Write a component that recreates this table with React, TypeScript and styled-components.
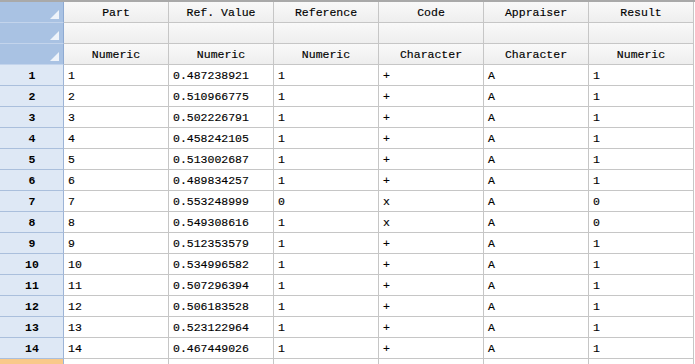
import {Fragment} from "react";
import styled, {createGlobalStyle} from "styled-components";

const GlobalStyle = createGlobalStyle`
  html, body {
    margin: 0;
    padding: 0;
    background: #ffffff;
  }
  * {
    box-sizing: border-box;
  }
`;

const Sheet = styled.div`
  display: grid;
  grid-template-columns: 64px repeat(6, 105px);
  grid-auto-rows: 21px;
  border-top: 2px solid #a9a9a9;
  font-family: "Liberation Mono", "Courier New", monospace;
  font-size: 11.5px;
  color: #000;
  -webkit-text-stroke: 0.15px #000;
  width: 695px;
`;

const Corner = styled.div`
  position: relative;
  background: #a9c2e3;
  border-right: 1px solid #8eaad2;
  border-bottom: 1px solid #c3d4ec;

  &::after {
    content: "";
    position: absolute;
    right: 4px;
    bottom: 3px;
    width: 9px;
    height: 9px;
    background: #eef3fa;
    clip-path: polygon(100% 0, 100% 100%, 0 100%);
  }
`;

const ColHead = styled.div`
  display: flex;
  align-items: center;
  justify-content: center;
  background: linear-gradient(#f9f9f9, #eeeeee);
  border-right: 1px solid #c6c6c6;
  border-bottom: 1px solid #c6c6c6;
  white-space: pre;
`;

const RowHead = styled.div<{ $current?: boolean }>`
  display: flex;
  align-items: center;
  justify-content: center;
  padding-left: 1px;
  font-weight: bold;
  -webkit-text-stroke: 0;
  background: ${props => props.$current ? "#f9c98a" : "#dee8f5"};
  border-right: 1px solid #9db4d6;
  border-bottom: 1px solid #aabfdc;
`;

const Cell = styled.div`
  display: flex;
  align-items: center;
  padding-left: 4px;
  background: #ffffff;
  border-right: 1px solid #c6c6c6;
  border-bottom: 1px solid #c6c6c6;
  white-space: pre;
`;

const columns = ["Part", "Ref. Value", "Reference", "Code", "Appraiser", "Result"];
const types = ["Numeric", "Numeric", "Numeric", "Character", "Character", "Numeric"];

const refValues = [
    "0.487238921", "0.510966775", "0.502226791", "0.458242105", "0.513002687",
    "0.489834257", "0.553248999", "0.549308616", "0.512353579", "0.534996582",
    "0.507296394", "0.506183528", "0.523122964", "0.467449026",
];

const rows = refValues.map((ref, i) => {
    const bad = i === 6 || i === 7;
    const reference = i === 6 ? "0" : "1";
    return [String(i + 1), ref, reference, bad ? "x" : "+", "A", bad ? "0" : "1"];
});

function App() {
    return (
        <>
            <GlobalStyle/>
            <Sheet>
                <Corner/>
                {columns.map(c => <ColHead key={c}>{c}</ColHead>)}
                <Corner/>
                {columns.map(c => <ColHead key={c}/>)}
                <Corner/>
                {types.map((t, i) => <ColHead key={i}>{t}</ColHead>)}
                {rows.map((row, r) => (
                    <Fragment key={r}>
                        <RowHead>{r + 1}</RowHead>
                        {row.map((v, c) => <Cell key={c}>{v}</Cell>)}
                    </Fragment>
                ))}
                <RowHead $current/>
                {columns.map(c => <Cell key={`last-${c}`}/>)}
            </Sheet>
        </>
    )
}

export default App;
